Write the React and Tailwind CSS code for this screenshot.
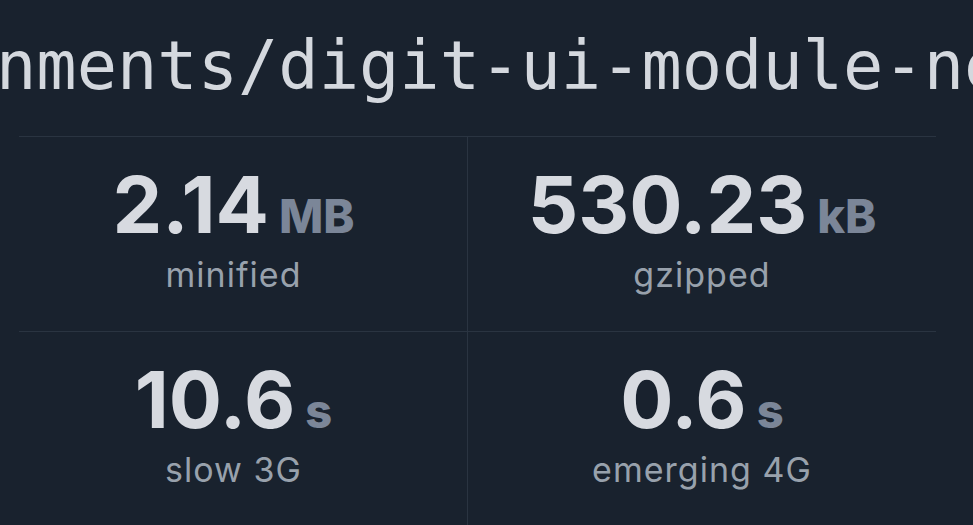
const stats = [
  { value: '2.14', unit: 'MB', label: 'minified' },
  { value: '530.23', unit: 'kB', label: 'gzipped' },
  { value: '10.6', unit: 's', label: 'slow 3G' },
  { value: '0.6', unit: 's', label: 'emerging 4G' },
];

const Stat = ({ stat, left }) => (
  <div
    className={`flex flex-col items-center pt-[28px] h-[195px] ${
      left ? 'border-r border-[#2a3441]' : ''
    }`}
  >
    <div className="flex items-baseline">
      <span className="text-[79px] font-bold leading-none text-[#d7dae0]">
        {stat.value}
      </span>
      <span className="text-[47px] font-extrabold leading-none text-[#7b8698] ml-[10px]">
        {stat.unit}
      </span>
    </div>
    <span className="text-[34px] leading-none text-[#98a1ac] mt-[14px] tracking-[0.03em]">
      {stat.label}
    </span>
  </div>
);

export default function App() {
  return (
    <div
      className="w-[973px] h-[525px] overflow-hidden bg-[#19222e]"
      style={{ fontFamily: 'Inter, "Noto Sans", sans-serif' }}
    >
      {/* package name, clipped on both sides */}
      <div className="h-[136px] overflow-hidden pt-[33px]">
        <div
          className="whitespace-nowrap text-[67px] leading-none text-[#d4d8de] -ml-[4px]"
          style={{ fontFamily: '"DejaVu Sans Mono", monospace' }}
        >
          nments/digit-ui-module-new
        </div>
      </div>

      {/* stats grid */}
      <div className="w-[936px]">
        <div className="ml-[19px] h-px bg-[#2a3441]" />
        <div className="grid grid-cols-2">
          <Stat stat={stats[0]} left />
          <Stat stat={stats[1]} />
        </div>
        <div className="ml-[19px] h-px bg-[#2a3441] -mt-px" />
        <div className="grid grid-cols-2">
          <Stat stat={stats[2]} left />
          <Stat stat={stats[3]} />
        </div>
      </div>
    </div>
  );
}
